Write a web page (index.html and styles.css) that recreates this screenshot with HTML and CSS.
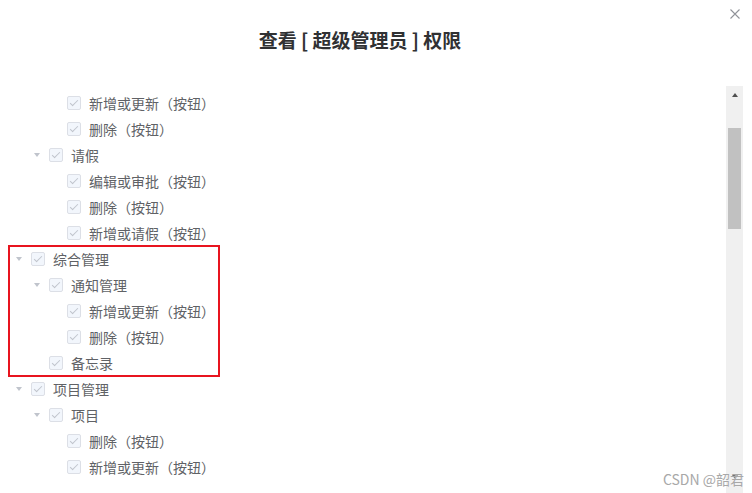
FILE: index.html
```html
<!DOCTYPE html>
<html lang="zh-CN">
<head>
<meta charset="utf-8">
<title>查看权限</title>
<link rel="stylesheet" href="styles.css">
</head>
<body>
<div class="dialog">
  <header class="dlg-header">
    <h2 class="dlg-title">查看 [ 超级管理员 ] 权限</h2>
    <button class="dlg-close" aria-label="关闭">
      <svg width="10" height="10" viewBox="0 0 10 10"><path d="M0.5 0.5 L9.5 9.5 M9.5 0.5 L0.5 9.5" stroke="#909399" stroke-width="1.1" fill="none"/></svg>
    </button>
  </header>
  <div class="dlg-body">
    <div class="tree-viewport">
      <div class="tree">
        <div class="row lv3"><span class="exp leaf"></span><span class="cb"></span><span class="label">新增或更新（按钮）</span></div>
        <div class="row lv3"><span class="exp leaf"></span><span class="cb"></span><span class="label">删除（按钮）</span></div>
        <div class="row lv2"><span class="exp"></span><span class="cb"></span><span class="label">请假</span></div>
        <div class="row lv3"><span class="exp leaf"></span><span class="cb"></span><span class="label">编辑或审批（按钮）</span></div>
        <div class="row lv3"><span class="exp leaf"></span><span class="cb"></span><span class="label">删除（按钮）</span></div>
        <div class="row lv3"><span class="exp leaf"></span><span class="cb"></span><span class="label">新增或请假（按钮）</span></div>
        <div class="node marked">
          <div class="row lv1"><span class="exp"></span><span class="cb"></span><span class="label">综合管理</span></div>
          <div class="row lv2"><span class="exp"></span><span class="cb"></span><span class="label">通知管理</span></div>
          <div class="row lv3"><span class="exp leaf"></span><span class="cb"></span><span class="label">新增或更新（按钮）</span></div>
          <div class="row lv3"><span class="exp leaf"></span><span class="cb"></span><span class="label">删除（按钮）</span></div>
          <div class="row lv2"><span class="exp leaf"></span><span class="cb"></span><span class="label">备忘录</span></div>
        </div>
        <div class="row lv1"><span class="exp"></span><span class="cb"></span><span class="label">项目管理</span></div>
        <div class="row lv2"><span class="exp"></span><span class="cb"></span><span class="label">项目</span></div>
        <div class="row lv3"><span class="exp leaf"></span><span class="cb"></span><span class="label">删除（按钮）</span></div>
        <div class="row lv3"><span class="exp leaf"></span><span class="cb"></span><span class="label">新增或更新（按钮）</span></div>
      </div>
    </div>
    <div class="scrollbar">
      <div class="sb-btn"><span class="tri-up"></span></div>
      <div class="sb-track"><div class="sb-thumb"></div></div>
      <div class="sb-btn"><span class="tri-down"></span></div>
      <div class="sb-tail"></div>
    </div>
  </div>
  <div class="watermark">CSDN @韶君</div>
</div>
</body>
</html>
```
FILE: styles.css
```css
html, body {
  margin: 0;
  padding: 0;
  background: #ffffff;
}
body {
  font-family: "Noto Sans CJK SC", "Noto Sans", sans-serif;
  color: #606266;
}
.dialog {
  position: relative;
  width: 752px;
  height: 493px;
  overflow: hidden;
  display: flex;
  flex-direction: column;
}
.dlg-header {
  padding: 26px 32px 0 0;
  height: 86px;
  box-sizing: border-box;
  text-align: center;
}
.dlg-title {
  margin: 0;
  font-size: 19px;
  line-height: 28px;
  font-weight: 700;
  color: #303133;
}
.dlg-close {
  position: absolute;
  top: 9px;
  right: 12px;
  width: 10px;
  height: 10px;
  padding: 0;
  border: 0;
  background: transparent;
  display: flex;
}
.dlg-body {
  flex: 1;
  display: flex;
  padding: 0 9px 0 7px;
  min-height: 0;
}
.tree-viewport {
  flex: 1;
  overflow: hidden;
  padding-top: 4px;
}
.tree {
  font-size: 14px;
}
.row {
  height: 26px;
  display: flex;
  align-items: center;
}
.lv1 { padding-left: 0; }
.lv2 { padding-left: 18px; }
.lv3 { padding-left: 36px; }
.exp {
  width: 24px;
  height: 26px;
  display: flex;
  align-items: center;
  justify-content: center;
  flex-shrink: 0;
}
.exp::before {
  content: "";
  width: 0;
  height: 0;
  border-left: 3.5px solid transparent;
  border-right: 3.5px solid transparent;
  border-top: 4px solid #c0c4cc;
  margin-top: -1px;
}
.exp.leaf::before {
  display: none;
}
.cb {
  position: relative;
  width: 14px;
  height: 14px;
  box-sizing: border-box;
  border: 1px solid #dcdfe6;
  border-radius: 2px;
  background: #f2f6fc;
  margin-right: 8px;
  flex-shrink: 0;
}
.cb::after {
  content: "";
  position: absolute;
  left: 4px;
  top: 1px;
  width: 3px;
  height: 7px;
  border: 1px solid #c0c4cc;
  border-left: 0;
  border-top: 0;
  transform: rotate(45deg);
}
.label {
  line-height: 26px;
  white-space: nowrap;
  color: #606266;
}
.node.marked {
  position: relative;
}
.node.marked::after {
  content: "";
  position: absolute;
  top: -1px;
  bottom: -1px;
  left: 1px;
  width: 212px;
  box-sizing: border-box;
  border: 2px solid #e8141f;
  pointer-events: none;
}
.scrollbar {
  width: 17px;
  background: #f0f0f0;
  display: flex;
  flex-direction: column;
  flex-shrink: 0;
}
.sb-btn {
  height: 17px;
  display: flex;
  align-items: center;
  justify-content: center;
  flex-shrink: 0;
}
.tri-up {
  width: 0;
  height: 0;
  border-left: 3.5px solid transparent;
  border-right: 3.5px solid transparent;
  border-bottom: 4px solid #505050;
}
.tri-down {
  width: 0;
  height: 0;
  border-left: 3.5px solid transparent;
  border-right: 3.5px solid transparent;
  border-top: 4px solid #505050;
}
.sb-track {
  flex: 1;
  padding: 25px 2px 0;
}
.sb-thumb {
  height: 101px;
  background: #c1c1c1;
}
.sb-tail {
  height: 8px;
  flex-shrink: 0;
}
.watermark {
  position: absolute;
  right: 8px;
  bottom: 5px;
  font-size: 14px;
  line-height: 18px;
  color: #a8a8a8;
  font-family: "Noto Sans CJK SC", "Liberation Sans", sans-serif;
  text-shadow: 0 0 1px #ffffff;
}
```
